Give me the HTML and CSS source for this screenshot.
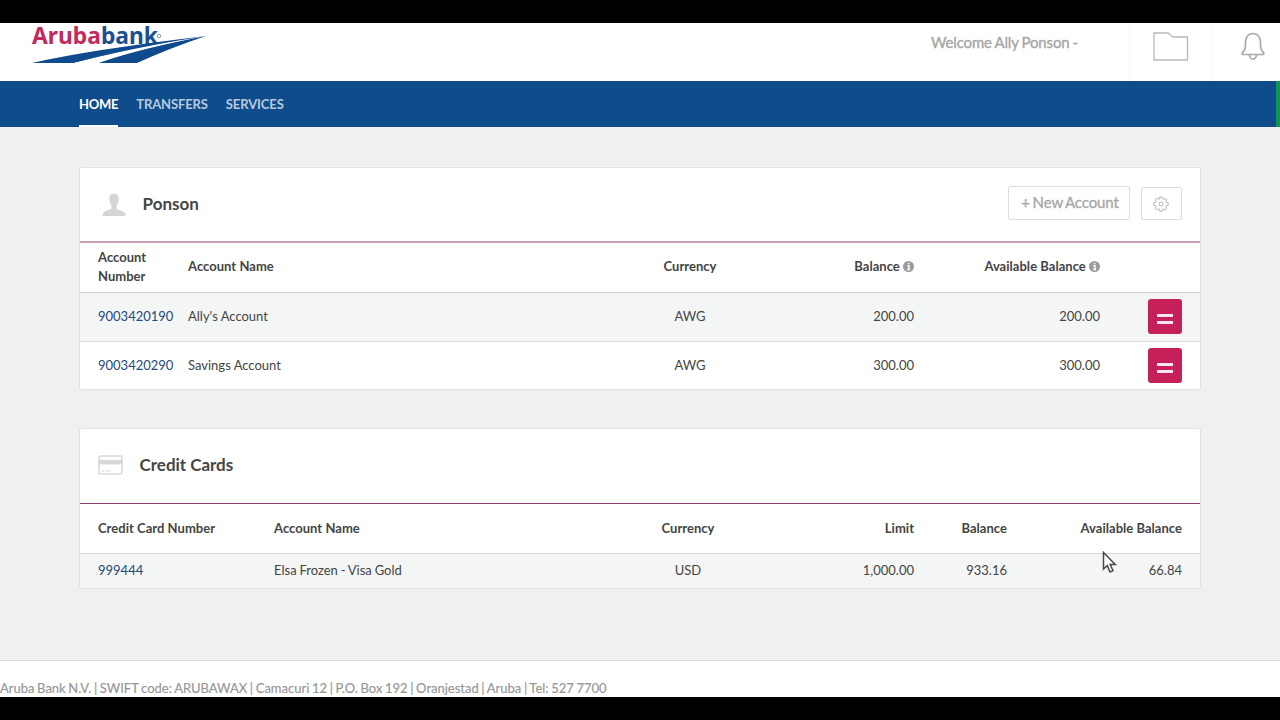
FILE: index.html
```html
<!DOCTYPE html>
<html lang="en">
<head>
<meta charset="utf-8">
<title>Arubabank</title>
<link rel="stylesheet" href="styles.css">
</head>
<body>
<div class="screen">
  <header class="top">
    <svg class="logo" width="180" height="44" viewBox="0 0 180 44">
      <text class="logo-text" x="2" y="21" textLength="126" lengthAdjust="spacingAndGlyphs"><tspan fill="#c22a5c">Aruba</tspan><tspan fill="#1c4f90">bank</tspan></text>
      <circle cx="129" cy="13" r="1.7" fill="none" stroke="#7d93b4" stroke-width=".9"/>
      <path d="M2 40Q58 27 176 13Q116 23 44 40Z" fill="#0f4a8c"/>
      <path d="M68 40Q112 25 176 13Q140 25 107 40Z" fill="#0f4a8c"/>
      <path d="M44 40Q100 25 176 13Q112 24 68 40Z" fill="#fff"/>
    </svg>
    <div class="welcome">Welcome Ally Ponson -</div>
    <div class="folder"><svg width="36" height="30" viewBox="0 0 36 30"><path d="M1 1H15L20 5H34.500V28H1Z" fill="none" stroke="#b9b9b9" stroke-width="1.300"/></svg></div>
    <div class="bell"><svg width="26" height="30" viewBox="0 0 26 30"><g fill="none" stroke="#a9a9a9" stroke-width="1.700" stroke-linejoin="round"><path d="M3.500 22.500H22.500Q24.500 22.500 23.500 20.500Q20.500 18 20.500 13V9.500Q19.500 1.500 13 1.500Q6.500 1.500 5.500 9.500V13Q5.500 18 2.500 20.500Q1.500 22.500 3.500 22.500Z"/><path d="M9.500 23Q10 27 13 27Q16 27 16.500 23"/></g></svg></div>
  </header>
  <nav class="nav">
    <a class="link active">HOME</a>
    <a class="link transfers">TRANSFERS</a>
    <a class="link">SERVICES</a>
  </nav>
  <main class="main">
    <section class="card">
      <div class="card-head">
        <svg class="person" width="24" height="24" viewBox="0 0 24 24"><path d="M12 0.500C16 0.500 17 3.500 16.500 7C16.300 9.500 15.500 11 14.500 12.500V15.500C16 17.500 23.500 17 23.500 23H.5C.5 17 8 17.500 9.500 15.500V12.500C8.500 11 7.700 9.500 7.500 7C7 3.500 8 .5 12 .5Z" fill="#d5d5d5"/></svg>
        <h2 class="title">Ponson</h2>
        <div class="new">+ New Account</div>
        <div class="gear"><svg width="16" height="16" viewBox="0 0 16 16" fill="none" stroke="#b3b3b3"><path stroke-linejoin="round" d="M6.700 1H9.300L9.700 2.900L10.900 3.400L12.500 2.300L13.900 3.700L12.800 5.300L13.200 6.400L15.200 6.800V9.200L13.200 9.700L12.800 10.800L13.900 12.400L12.400 13.800L10.900 12.800L9.700 13.300L9.300 15.200H6.700L6.300 13.300L5.100 12.800L3.600 13.800L2.100 12.400L3.200 10.800L2.800 9.700L.8 9.200V6.800L2.800 6.400L3.200 5.300L2.100 3.700L3.500 2.300L5.100 3.400L6.300 2.900Z"/><circle cx="8" cy="8.100" r="2.100"/></svg></div>
      </div>
      <div class="row accounts labels tight">
        <div class="wrap">Account Number</div><div>Account Name</div><div class="center">Currency</div>
        <div class="right">Balance <svg class="info" width="11" height="11" viewBox="0 0 10 10"><circle cx="5" cy="5" r="5" fill="#9b9b9b"/><path d="M4 4.300H5.500V7.700M3.800 7.700H6.500M4.500 2.300H5.800" stroke="#fff" stroke-width="1.200" fill="none"/></svg></div>
        <div class="right">Available Balance <svg class="info" width="11" height="11" viewBox="0 0 10 10"><circle cx="5" cy="5" r="5" fill="#9b9b9b"/><path d="M4 4.300H5.500V7.700M3.800 7.700H6.500M4.500 2.300H5.800" stroke="#fff" stroke-width="1.200" fill="none"/></svg></div>
        <div></div>
      </div>
      <div class="row accounts shaded">
        <a class="number">9003420190</a><div>Ally's Account</div><div class="center">AWG</div><div class="right">200.00</div><div class="right">200.00</div><div class="menu"><i></i><i></i></div>
      </div>
      <div class="row accounts">
        <a class="number">9003420290</a><div>Savings Account</div><div class="center">AWG</div><div class="right">300.00</div><div class="right">300.00</div><div class="menu"><i></i><i></i></div>
      </div>
    </section>
    <section class="card cards">
      <div class="card-head dark">
        <svg class="credit" width="25" height="20" viewBox="0 0 25 20"><rect x="1" y="1" width="23" height="18" rx="1.500" fill="#fff" stroke="#d9d9d9" stroke-width="1.600"/><path d="M1 5H24V9.500H1Z" fill="#d9d9d9"/><path d="M3.500 16H6.500M8 16H13" stroke="#d0d0d0"/></svg>
        <h2 class="title">Credit Cards</h2>
      </div>
      <div class="row credits labels">
        <div>Credit Card Number</div><div>Account Name</div><div class="center">Currency</div><div class="right">Limit</div><div class="right">Balance</div><div class="right">Available Balance</div>
      </div>
      <div class="row credits shaded short">
        <a class="number">999444</a><div>Elsa Frozen - Visa Gold</div><div class="center">USD</div><div class="right">1,000.00</div><div class="right">933.16</div><div class="right">66.84</div>
      </div>
    </section>
  </main>
  <footer class="foot">Aruba Bank N.V. | SWIFT code: ARUBAWAX | Camacuri 12 | P.O. Box 192 | Oranjestad | Aruba | Tel: 527 7700</footer>
  <svg class="cursor" width="15" height="24" viewBox="0 0 15 24"><path d="M1.500 1.500V18L5.300 14.500L8 21L11 19.700L8.200 13.500H13.300Z" fill="#fff" stroke="#484848" stroke-width="1.500"/></svg>
</div>
</body>
</html>
```
FILE: styles.css
```css
* { box-sizing: border-box; }
body { margin: 0; background: #000; }
.screen {
  position: relative;
  display: flex;
  flex-direction: column;
  width: 1280px;
  height: 720px;
  padding: 23px 0;
  background: #000;
  color: #444;
  font: 13px/19px Lato, "Open Sans", sans-serif;
}
svg { display: block; }
.top { display: flex; height: 58px; flex: none; background: #fff; }
.logo { margin-left: 30px; overflow: visible; }
.logo-text { font: bold 24px "Noto Sans", sans-serif; }
.welcome {
  margin-left: auto;
  padding-top: 9px;
  font-size: 15px;
  line-height: 20px;
  color: #a6a6a6;
  -webkit-text-stroke: .35px #a6a6a6;
  white-space: nowrap;
  letter-spacing: -.15px;
  word-spacing: -.6px;
}
.folder { width: 83px; height: 58px; margin-left: 51px; padding: 9px 0 0 23px; border: solid #fafafa; border-width: 0 1px; }
.bell { width: 68px; padding: 9px 0 0 28px; }
.nav {
  display: flex;
  flex: none;
  height: 46px;
  padding-left: 79px;
  background: #0e4c8c;
  border-right: 4px solid #109650;
  gap: 18px;
}
.link {
  height: 46px;
  padding-top: 13px;
  line-height: 20px;
  font-weight: bold;
  color: #b9c9df;
  letter-spacing: -.12px;
}
.active { color: #fff; border-bottom: 2px solid #fff; letter-spacing: -.25px; }
.main { flex: none; height: 533px; padding: 40px 79px 0; background: #eff1f1; }
.card { width: 1122px; border: 1px solid #e1e3e3; border-radius: 2px; background: #fff; }
.cards { margin-top: 38px; }
.card-head {
  display: flex;
  align-items: flex-start;
  height: 75px;
  padding: 18px 18px 0;
  border-bottom: 2px solid #cc9fb8;
}
.card-head.dark { border-bottom: 1px solid #8b3f6d; }
.person { margin: 7px 0 0 4px; }
.credit { margin-top: 8px; }
.title { margin: 8px 0 0 16.6px; font-size: 17px; line-height: 20px; color: #454545; letter-spacing: -.03px; }
.new {
  width: 122px;
  height: 34px;
  margin-left: auto;
  padding-left: 2px;
  border: 1px solid #ddd;
  border-radius: 2px;
  color: #a8a8a8;
  -webkit-text-stroke: .35px #a8a8a8;
  font-size: 15px;
  line-height: 31px;
  text-align: center;
  white-space: nowrap;
  letter-spacing: -.1px;
  word-spacing: -1px;
}
.gear { width: 41px; height: 33px; margin: 1px 0 0 11px; padding: 8px 0 0 11px; border: 1px solid #ddd; border-radius: 2px; }
.row { display: grid; align-items: center; height: 48px; padding: 0 18px; white-space: nowrap; }
.accounts { grid-template-columns: 90px 442px 120px 164px 186px 82px; }
.credits { grid-template-columns: 176px 354px 120px 166px 93px 175px; }
.labels { height: 50px; border-bottom: 1px solid #d4d6d6; font-weight: bold; letter-spacing: .03px; }
.tight { height: 50px; padding-bottom: 2px; }
.shaded { height: 49px; background: #f4f6f6; border-bottom: 1px solid #dcdede; }
.accounts:not(.labels) { padding-bottom: 1px; }
.accounts:last-child { height: 47px; padding-bottom: 0; }
.short { height: 34px; padding-bottom: 1px; border: 0; word-spacing: -.5px; }
.wrap { white-space: normal; width: 60px; }
.center { text-align: center; }
.right { text-align: right; }
.info { display: inline-block; vertical-align: -1px; }
.number { color: #25477d; }
.menu {
  display: flex;
  flex-direction: column;
  gap: 4px;
  justify-self: end;
  width: 34px;
  height: 35px;
  padding: 15px 9px 0;
  border-radius: 3px;
  background: #c5205a;
}
.menu i { height: 3px; background: #fbe4ed; }
.foot { flex: none; height: 37px; padding-top: 18px; border-top: 1px solid #d9dbdb; background: #fff; color: #969696; -webkit-text-stroke: .15px #969696; white-space: nowrap; word-spacing: -.72px; }
.cursor { position: absolute; left: 1102px; top: 551px; }
```
